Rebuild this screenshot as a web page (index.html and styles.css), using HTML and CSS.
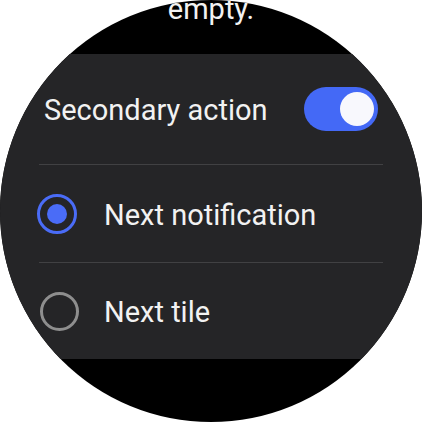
FILE: index.html
```html
<!DOCTYPE html>
<html>
<head>
<meta charset="utf-8">
<link rel="stylesheet" href="styles.css">
</head>
<body>
<div class="watch">
  <div class="top">
    <div class="top-text">empty.</div>
  </div>
  <div class="card">
    <div class="row row-toggle">
      <span class="label">Secondary action</span>
      <span class="toggle"><span class="thumb"></span></span>
    </div>
    <div class="divider"></div>
    <div class="row row-radio">
      <span class="radio radio-on"><span class="dot"></span></span>
      <span class="label">Next notification</span>
    </div>
    <div class="divider"></div>
    <div class="row row-radio row-last">
      <span class="radio radio-off"></span>
      <span class="label">Next tile</span>
    </div>
  </div>
</div>
</body>
</html>
```

FILE: styles.css
```css
html, body {
  margin: 0;
  padding: 0;
  background: #ffffff;
}
body {
  width: 422px;
  height: 422px;
  overflow: hidden;
  font-family: Roboto, "Liberation Sans", sans-serif;
}
.watch {
  width: 422px;
  height: 422px;
  border-radius: 50%;
  overflow: hidden;
  background: #000000;
  display: flex;
  flex-direction: column;
}
.top {
  height: 54px;
  flex: none;
  display: flex;
  justify-content: center;
}
.top-text {
  margin-top: -8px;
  font-size: 29px;
  line-height: 34px;
  color: #f2f2f2;
  height: 34px;
}
.card {
  flex: none;
  height: 305px;
  background: #252527;
  display: flex;
  flex-direction: column;
}
.label {
  font-size: 29px;
  color: #f2f2f2;
  line-height: 34px;
  padding-top: 2px;
}
.row {
  display: flex;
  align-items: center;
}
.row-toggle {
  height: 110px;
  padding: 0 44px;
  justify-content: space-between;
}
.row-radio {
  height: 97px;
  padding-left: 37px;
  gap: 27px;
}
.row-last {
  height: 96px;
  padding-left: 40px;
  gap: 25px;
}
.divider {
  height: 1px;
  margin: 0 39px;
  background: #414143;
}
.toggle {
  width: 74px;
  height: 44px;
  border-radius: 22px;
  background: #4469f6;
  display: flex;
  align-items: center;
  justify-content: flex-end;
  padding-right: 4px;
  box-sizing: border-box;
}
.thumb {
  width: 34px;
  height: 34px;
  border-radius: 50%;
  background: #f8f8fd;
}
.radio {
  box-sizing: border-box;
  border-radius: 50%;
  display: flex;
  align-items: center;
  justify-content: center;
  flex: none;
}
.radio-on {
  width: 40px;
  height: 40px;
  border: 3.5px solid #4a6cf7;
}
.dot {
  width: 20px;
  height: 20px;
  border-radius: 50%;
  background: #4a6cf7;
}
.radio-off {
  width: 39px;
  height: 39px;
  border: 3px solid #8e8e8e;
}
```
